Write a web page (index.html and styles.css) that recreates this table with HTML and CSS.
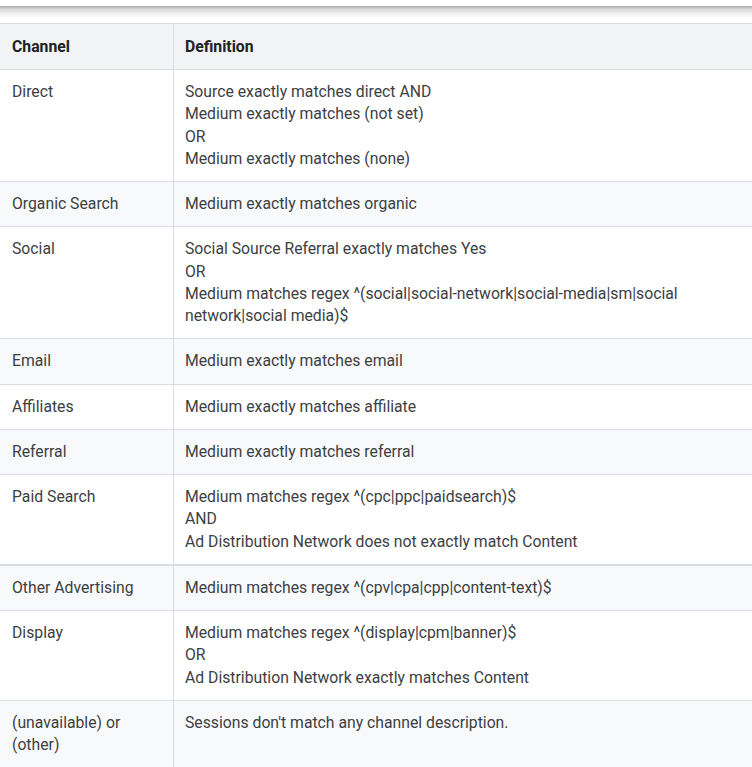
FILE: index.html
```html
<!DOCTYPE html>
<html>
<head>
<meta charset="utf-8">
<link rel="stylesheet" href="styles.css">
</head>
<body>
<div class="topbar"></div>
<div class="shadow"></div>
<table class="channels">
  <thead>
    <tr><th class="c1">Channel</th><th>Definition</th></tr>
  </thead>
  <tbody>
    <tr><td>Direct</td><td>Source exactly matches direct AND<br>Medium exactly matches (not set)<br>OR<br>Medium exactly matches (none)</td></tr>
    <tr><td>Organic Search</td><td>Medium exactly matches organic</td></tr>
    <tr><td>Social</td><td>Social Source Referral exactly matches Yes<br>OR<br>Medium matches regex ^(social|social-network|social-media|sm|social network|social media)$</td></tr>
    <tr><td>Email</td><td>Medium exactly matches email</td></tr>
    <tr><td>Affiliates</td><td>Medium exactly matches affiliate</td></tr>
    <tr><td>Referral</td><td>Medium exactly matches referral</td></tr>
    <tr class="thick"><td>Paid Search</td><td>Medium matches regex ^(cpc|ppc|paidsearch)$<br>AND<br>Ad Distribution Network does not exactly match Content</td></tr>
    <tr><td>Other Advertising</td><td>Medium matches regex ^(cpv|cpa|cpp|content-text)$</td></tr>
    <tr><td>Display</td><td>Medium matches regex ^(display|cpm|banner)$<br>OR<br>Ad Distribution Network exactly matches Content</td></tr>
    <tr><td>(unavailable) or<br>(other)</td><td>Sessions don't match any channel description.<br>&nbsp;</td></tr>
  </tbody>
</table>
</body>
</html>
```
FILE: styles.css
```css
html, body {
  margin: 0;
  padding: 0;
  background: #fff;
}
body {
  font-family: Roboto, "Liberation Sans", Arial, sans-serif;
  font-size: 15.75px;
  line-height: 22.2px;
  color: #3c4043;
  overflow: hidden;
}
.topbar {
  height: 6px;
  background: #fff;
}
.shadow {
  height: 12px;
  background: linear-gradient(#a9a9a9, #d8d8d8 25%, #f4f4f4 70%, #fff);
}
.channels {
  margin-top: 5px;
  width: 752px;
  border-collapse: collapse;
  table-layout: fixed;
}
.channels th, .channels td {
  text-align: left;
  vertical-align: top;
  padding: 11px 12px 11.1px 11px;
  border-top: 1px solid #dadce0;
  border-bottom: 1px solid #dadce0;
}
.channels th {
  padding-top: 12px;
  padding-bottom: 11px;
  background: #f1f3f4;
  color: #202124;
  font-weight: 700;
}
.channels th:first-child, .channels td:first-child {
  width: 149px;
  padding-left: 12px;
  border-right: 1px solid #dadce0;
}
.channels tbody tr:nth-child(even) td {
  background: #f8f9fa;
}
.channels tr.thick td {
  border-bottom: 2px solid #dadce0;
}
```
